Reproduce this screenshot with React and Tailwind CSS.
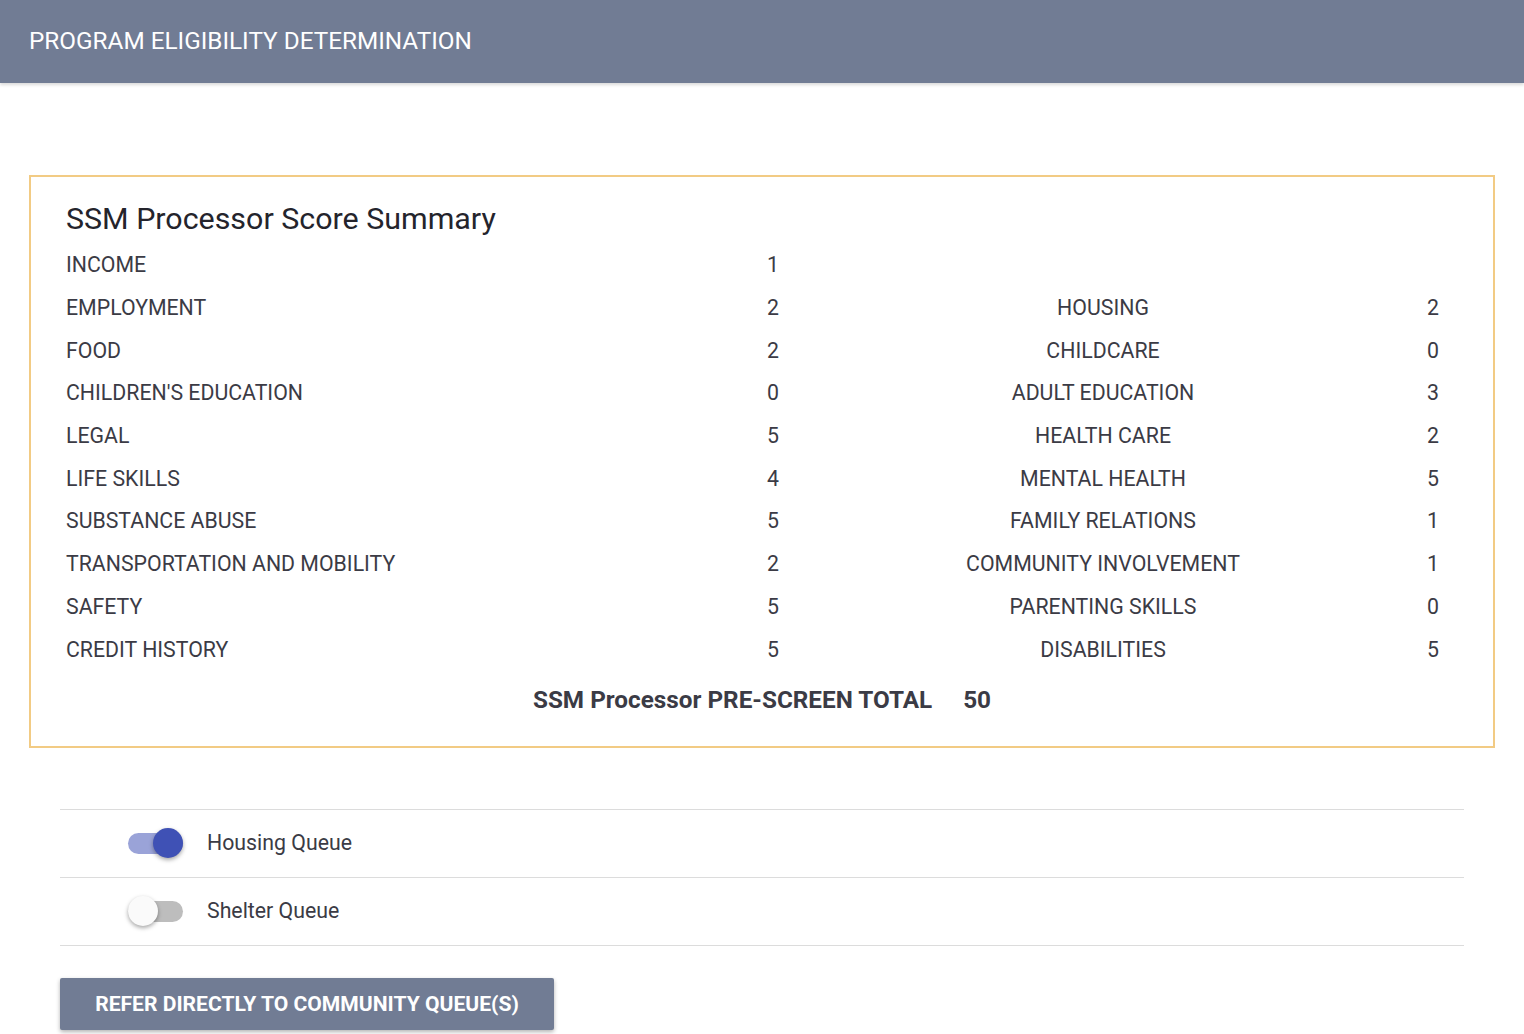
import { useState } from "react";

const rows = [
  ["INCOME", 1, null, null],
  ["EMPLOYMENT", 2, "HOUSING", 2],
  ["FOOD", 2, "CHILDCARE", 0],
  ["CHILDREN'S EDUCATION", 0, "ADULT EDUCATION", 3],
  ["LEGAL", 5, "HEALTH CARE", 2],
  ["LIFE SKILLS", 4, "MENTAL HEALTH", 5],
  ["SUBSTANCE ABUSE", 5, "FAMILY RELATIONS", 1],
  ["TRANSPORTATION AND MOBILITY", 2, "COMMUNITY INVOLVEMENT", 1],
  ["SAFETY", 5, "PARENTING SKILLS", 0],
  ["CREDIT HISTORY", 5, "DISABILITIES", 5],
];

function Toggle({ on, onClick }) {
  return (
    <button onClick={onClick} className="relative w-[55px] h-[30px] flex items-center">
      <span className={`block w-[55px] h-[21px] rounded-full ${on ? "bg-[#9aa3d8]" : "bg-[#bdbdbd]"}`} />
      <span
        className={`absolute top-0 w-[30px] h-[30px] rounded-full shadow-[0_2px_4px_rgba(0,0,0,0.35)] ${
          on ? "left-[25px] bg-[#3f51b5]" : "left-0 bg-[#fafafa]"
        }`}
      />
    </button>
  );
}

function App() {
  const [queues, setQueues] = useState({ housing: true, shelter: false });

  return (
    <div className="min-h-screen bg-white font-['Roboto',sans-serif] text-[#3b3b45]">
      <div className="h-[83px] bg-[#717c94] flex items-center px-[29px] shadow-[0_2px_3px_rgba(0,0,0,0.15)]">
        <h1 className="text-white text-[24.3px] leading-none">PROGRAM ELIGIBILITY DETERMINATION</h1>
      </div>

      <div className="mx-[29px] mt-[92px] border-2 border-[#f2cb84] pl-[35px] pr-[54px] pt-[24px] pb-[31px]">
        <h2 className="text-[30.4px] leading-[36px] text-[#24242c] mb-[7px]">SSM Processor Score Summary</h2>
        {rows.map(([l, lv, r, rv]) => (
          <div key={l} className="flex h-[42.7px] items-center text-[21.3px] leading-[26px]">
            <div className="w-[713px] flex justify-between">
              <span>{l}</span>
              <span>{lv}</span>
            </div>
            <div className="flex-1 flex">
              <span className="flex-1 text-center">{r}</span>
              <span>{rv}</span>
            </div>
          </div>
        ))}
        <div className="flex justify-center gap-[31px] text-[24.3px] leading-[30px] font-bold text-[#3b3b45] mt-[14px] mr-[-19px]">
          <span>SSM Processor PRE-SCREEN TOTAL</span>
          <span>50</span>
        </div>
      </div>

      <div className="mx-[60px] mt-[61px] border-t border-[#dcdcdc]">
        <div className="h-[68px] flex items-center gap-[24px] pl-[68px] border-b border-[#dcdcdc]">
          <Toggle on={queues.housing} onClick={() => setQueues({ ...queues, housing: !queues.housing })} />
          <span className="text-[21.3px]">Housing Queue</span>
        </div>
        <div className="h-[68px] flex items-center gap-[24px] pl-[68px] border-b border-[#dcdcdc]">
          <Toggle on={queues.shelter} onClick={() => setQueues({ ...queues, shelter: !queues.shelter })} />
          <span className="text-[21.3px]">Shelter Queue</span>
        </div>
        <button className="mt-[32px] w-[494px] h-[52px] bg-[#717c94] text-white font-bold text-[21.1px] rounded-[2px] shadow-[0_2px_4px_rgba(0,0,0,0.3)]">
          REFER DIRECTLY TO COMMUNITY QUEUE(S)
        </button>
      </div>
    </div>
  );
}

export default App;
